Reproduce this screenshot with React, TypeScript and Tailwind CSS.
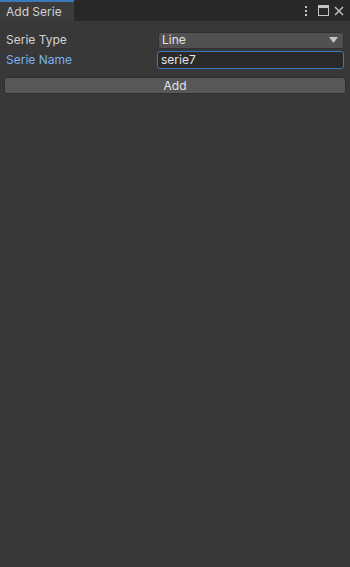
import React from "react";

export default function App() {
  return (
    <div className="w-[350px] h-[567px] bg-[#383838] flex flex-col text-[12px] text-[#d2d2d2]" style={{ fontFamily: "Inter, 'Noto Sans', sans-serif" }}>
      <div className="h-[21px] bg-[#282828] flex items-stretch shrink-0">
        <div className="w-[74px] bg-[#3c3c3c] border-t-2 border-[#3a79bb] flex items-center pl-[6px] text-[12px] text-[#d2d2d2]">
          Add Serie
        </div>
        <div className="flex-1" />
        <div className="flex items-center pr-[6px] text-[#c4c4c4]">
          <svg width="4" height="12" viewBox="0 0 4 12" className="mr-[10px]">
            <rect x="1" y="1" width="2" height="2" fill="#c4c4c4" />
            <rect x="1" y="5" width="2" height="2" fill="#c4c4c4" />
            <rect x="1" y="9" width="2" height="2" fill="#c4c4c4" />
          </svg>
          <svg width="11" height="11" viewBox="0 0 11 11" className="mr-[5px]">
            <rect x="0.5" y="0.5" width="10" height="10" fill="none" stroke="#c4c4c4" />
            <rect x="0.5" y="0.5" width="10" height="2.5" fill="#c4c4c4" />
          </svg>
          <svg width="10" height="10" viewBox="0 0 10 10">
            <path d="M1 1 L9 9 M9 1 L1 9" stroke="#c4c4c4" strokeWidth="1.4" />
          </svg>
        </div>
      </div>
      <div className="flex flex-col pt-[10px] px-[4px]">
        <div className="flex items-center h-[18px]">
          <div className="w-[154px] pl-[2px] text-[#d2d2d2]">Serie Type</div>
          <div className="flex-1 mr-[2px] h-[17px] bg-[#515151] border border-[#303030] rounded-[3px] flex items-center pl-[3px] pr-[5px] text-[#e4e4e4]">
            <span className="flex-1">Line</span>
            <svg width="9" height="6" viewBox="0 0 9 6">
              <path d="M0 0 H9 L4.5 6 Z" fill="#c4c4c4" />
            </svg>
          </div>
        </div>
        <div className="flex items-center h-[18px] mt-[2px]">
          <div className="w-[153px] pl-[2px] text-[#7bb0ec]">Serie Name</div>
          <div className="flex-1 mr-[2px] h-[18px] bg-[#2a2a2a] border border-[#3a79bb] rounded-[3px] flex items-center pl-[3px] text-[#e4e4e4]">
            serie7
          </div>
        </div>
        <div className="mt-[8px] h-[17px] bg-[#585858] border border-[#303030] rounded-[3px] flex items-center justify-center text-[#e4e4e4]">
          Add
        </div>
      </div>
    </div>
  );
}
